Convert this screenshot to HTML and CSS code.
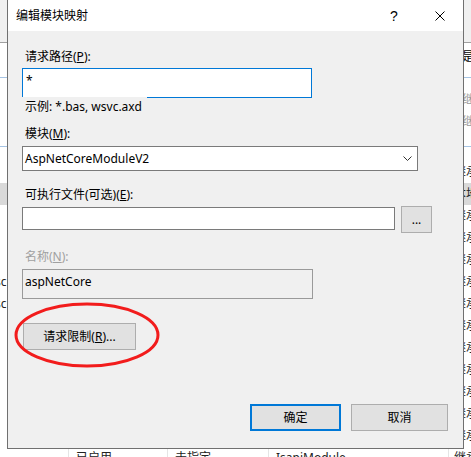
FILE: index.html
```html
<!DOCTYPE html>
<html>
<head>
    <title>编辑模块映射</title>
    <link rel="stylesheet" href="styles.css">
</head>

<body>

  <div class="backdrop">
    <div class="bg-toolbar"></div>
    <div class="bg-info">是日志</div>
    <div class="bg-group">
      <div class="bg-muted">继承</div>
      <div class="bg-muted">继承</div>
    </div>
    <div class="bg-list">
      <div class="bg-row"><span class="c1"></span><span class="c2"></span><span class="c3"></span><span class="c4"></span><span class="c5">继承</span></div>
      <div class="bg-row sel"><span class="c1"></span><span class="c2"></span><span class="c3"></span><span class="c4"></span><span class="c5">本地</span></div>
      <div class="bg-row"><span class="c1"></span><span class="c2"></span><span class="c3"></span><span class="c4"></span><span class="c5">继承</span></div>
      <div class="bg-row"><span class="c1"></span><span class="c2"></span><span class="c3"></span><span class="c4"></span><span class="c5">继承</span></div>
      <div class="bg-row"><span class="c1"></span><span class="c2"></span><span class="c3"></span><span class="c4"></span><span class="c5">继承</span></div>
      <div class="bg-row"><span class="c1 tail">Misc</span><span class="c2"></span><span class="c3"></span><span class="c4"></span><span class="c5">继承</span></div>
      <div class="bg-row"><span class="c1 tail">Misc</span><span class="c2"></span><span class="c3"></span><span class="c4"></span><span class="c5">继承</span></div>
      <div class="bg-row"><span class="c1"></span><span class="c2"></span><span class="c3"></span><span class="c4"></span><span class="c5">继承</span></div>
      <div class="bg-row"><span class="c1"></span><span class="c2"></span><span class="c3"></span><span class="c4"></span><span class="c5">继承</span></div>
      <div class="bg-row"><span class="c1"></span><span class="c2"></span><span class="c3"></span><span class="c4"></span><span class="c5">继承</span></div>
      <div class="bg-row"><span class="c1"></span><span class="c2"></span><span class="c3"></span><span class="c4"></span><span class="c5">继承</span></div>
      <div class="bg-row"><span class="c1"></span><span class="c2"></span><span class="c3"></span><span class="c4"></span><span class="c5">继承</span></div>
      <div class="bg-row"><span class="c1"></span><span class="c2"></span><span class="c3"></span><span class="c4"></span><span class="c5">继承</span></div>
      <div class="bg-row"><span class="c1"></span><span class="c2">已启用</span><span class="c3">未指定</span><span class="c4">IsapiModule</span><span class="c5">继承</span></div>
    </div>
  </div>

  <div class="dialog">
    <div class="titlebar">
      <span class="title">编辑模块映射</span>
      <span class="tb-btn help">?</span>
      <span class="tb-btn">
        <svg width="10" height="10" viewBox="0 0 10 10">
          <path d="M0.5 0.5 L9.5 9.5 M9.5 0.5 L0.5 9.5" stroke="#000" stroke-width="1" fill="none"/>
        </svg>
      </span>
    </div>

    <div class="dlg-body">
      <div class="lbl lbl-first">请求路径(<u>P</u>):</div>
      <div class="field path focused">*</div>
      <div class="hint">示例: *.bas, wsvc.axd</div>

      <div class="lbl lbl-module">模块(<u>M</u>):</div>
      <div class="combo">
        <span>AspNetCoreModuleV2</span>
        <svg width="9" height="5" viewBox="0 0 9 5">
          <polyline points="0.5,0.5 4.5,4.5 8.5,0.5" stroke="#333" stroke-width="1" fill="none"/>
        </svg>
      </div>

      <div class="lbl lbl-gap">可执行文件(可选)(<u>E</u>):</div>
      <div class="exe-row">
        <div class="field exe"></div>
        <button class="btn browse">...</button>
      </div>

      <div class="lbl lbl-gap disabled">名称(<u>N</u>):</div>
      <div class="field name readonly">aspNetCore</div>

      <button class="btn restrict">请求限制(<u>R</u>)...</button>

      <div class="footer">
        <button class="btn default">确定</button>
        <button class="btn cancel">取消</button>
      </div>
    </div>
  </div>

  <svg class="mark" width="147" height="66" viewBox="0 0 147 66">
    <ellipse cx="73" cy="33" rx="71" ry="31" stroke="#f21c1c" stroke-width="3" fill="none"/>
  </svg>

</body>

</html>
```

FILE: styles.css
```css
html, body {
  margin: 0;
}

body {
  position: relative;
  width: 471px;
  height: 457px;
  overflow: hidden;
  background: #fff;
  color: #000;
  font-family: "Noto Sans", "Noto Sans CJK SC", sans-serif;
  font-size: 12px;
  line-height: 16px;
}

/* window behind the dialog */
.backdrop {
  display: flex;
  flex-direction: column;
  white-space: nowrap;
}

.bg-toolbar {
  height: 42px;
  background: #f0f0f0;
  border-bottom: 1px solid #a0a0a0;
}

.bg-info {
  padding: 6px 0 0 462px;
  height: 28px;
  overflow: hidden;
  border-bottom: 1px solid #a6c4e4;
}

.bg-group {
  height: 69px;
  padding-top: 14px;
  box-sizing: border-box;
  border-bottom: 1px solid #a6c4e4;
  margin-bottom: 14px;
}

.bg-muted {
  color: #9a9a9a;
  padding-left: 462px;
  height: 22px;
  overflow: hidden;
}

.bg-row {
  display: flex;
  height: 22px;
  line-height: 22px;
  color: #222;
}

.bg-row.sel {
  background: #d9d9d9;
}

.bg-row span {
  display: block;
  flex: none;
  box-sizing: border-box;
  overflow: hidden;
  padding-left: 7px;
}

.c1 { width: 68px; }
.c2 { width: 99px; border-left: 1px solid #e5e5e5; }
.c3 { width: 101px; border-left: 1px solid #e5e5e5; }
.c4 { width: 180px; border-left: 1px solid #e5e5e5; }
.c5 { width: 40px; border-left: 1px solid #e5e5e5; padding-left: 5px !important; }

.bg-row .c1.tail {
  padding-left: 0;
  text-indent: -19px;
}

/* dialog */
.dialog {
  position: absolute;
  left: 7px;
  top: -1px;
  width: 457px;
  height: 450px;
  box-sizing: border-box;
  border: 1px solid #707070;
  background: #f0f0f0;
  display: flex;
  flex-direction: column;
}

.titlebar {
  height: 31px;
  flex: none;
  display: flex;
  align-items: center;
  background: #fff;
}

.title {
  flex: 1;
  padding-left: 8px;
}

.tb-btn {
  width: 46px;
  height: 31px;
  display: flex;
  align-items: center;
  justify-content: center;
}

.tb-btn.help {
  font-family: "Liberation Sans", sans-serif;
  font-size: 14px;
  padding-top: 1px;
  box-sizing: border-box;
}

.dlg-body {
  flex: 1;
  display: flex;
  flex-direction: column;
  align-items: flex-start;
  padding: 0 15px 17px 14px;
}

.lbl {
  padding-left: 3px;
}

.lbl-first { margin-top: 18px; }
.lbl-module { margin-top: 11px; }
.lbl-gap { margin-top: 16px; }

.lbl.disabled {
  color: #a0a0a0;
}

.field {
  box-sizing: border-box;
  border: 1px solid #7a7a7a;
  background: #fff;
  padding: 4px 2px 0 3px;
}

.path {
  width: 290px;
  height: 30px;
  margin-top: 3px;
}

.focused {
  border-color: #0078d7;
}

.hint {
  position: relative;
  margin-top: -1px;
  padding: 2px 5px 0 3px;
  background: #f0f0f0;
}

.combo {
  box-sizing: border-box;
  width: 396px;
  height: 25px;
  margin-top: 4px;
  border: 1px solid #7a7a7a;
  background: #fff;
  display: flex;
  align-items: center;
  justify-content: space-between;
  padding: 0 5px 0 2px;
}

.exe-row {
  display: flex;
  align-items: flex-start;
  margin-top: 3px;
}

.exe {
  width: 373px;
  height: 23px;
  margin-top: 1px;
}

.readonly {
  background: #f0f0f0;
  border-color: #9a9a9a;
}

.name {
  width: 291px;
  height: 30px;
  margin-top: 4px;
  padding-left: 2px;
}

.btn {
  box-sizing: border-box;
  height: 27px;
  padding: 0;
  background: #e1e1e1;
  border: 1px solid #adadad;
  color: #000;
  font: inherit;
  line-height: 16px;
}

.browse {
  width: 31px;
  margin-left: 6px;
}

.restrict {
  width: 113px;
  margin: 24px 0 0 1px;
}

.footer {
  margin-top: auto;
  align-self: stretch;
  display: flex;
  justify-content: flex-end;
  gap: 10px;
}

.default {
  width: 91px;
  border: 2px solid #0078d7;
}

.cancel {
  width: 97px;
}

/* red annotation drawn over the screenshot */
.mark {
  position: absolute;
  left: 14px;
  top: 302px;
}
```
